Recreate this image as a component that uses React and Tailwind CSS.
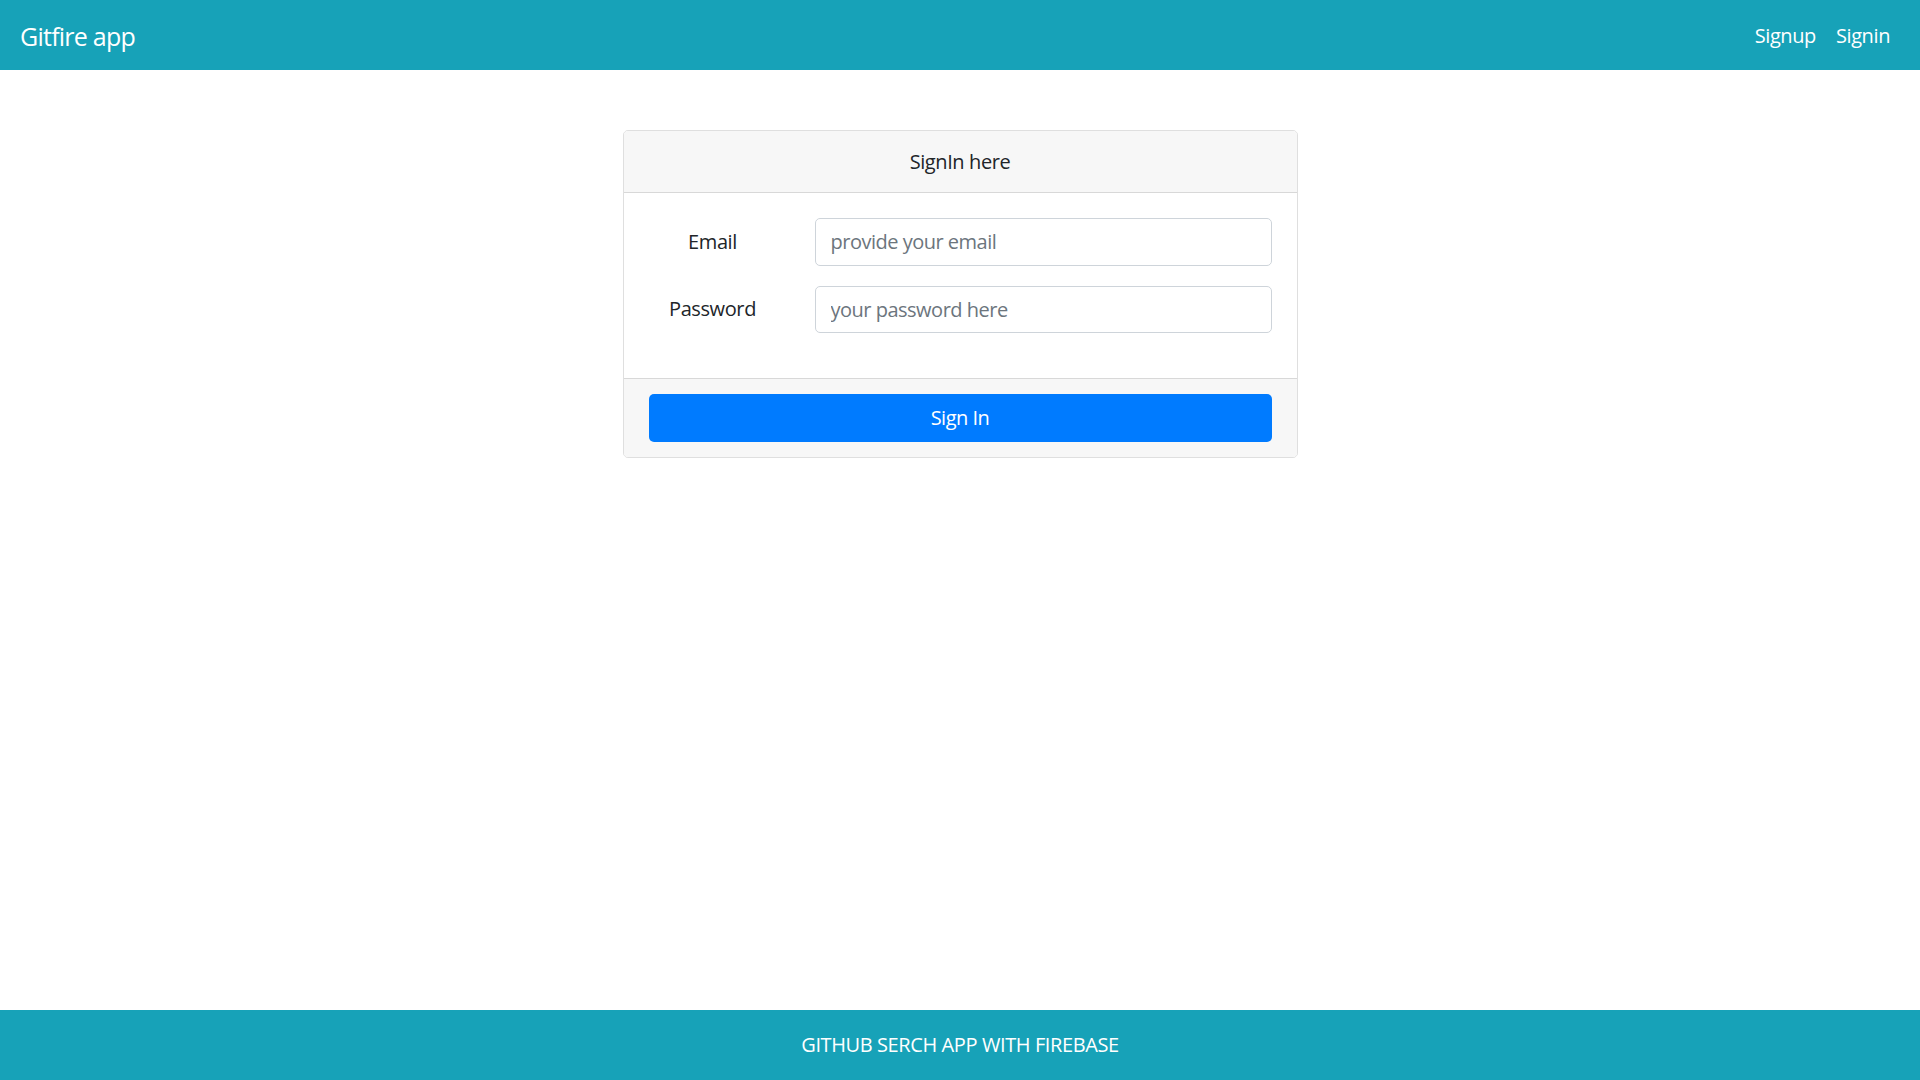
export default function App() {
  return (
    <div className="min-h-screen flex flex-col bg-white text-[#212529] font-['Segoe_UI','Open_Sans',sans-serif] tracking-[-0.025em]">
      {/* Top bar */}
      <nav className="h-[70px] bg-[#17a2b8] flex items-center justify-between px-[20px]">
        <a className="text-white text-[25px] leading-none tracking-[-0.03em] pt-[2px]">Gitfire app</a>
        <div className="flex items-center pt-[2px]">
          <a className="text-white text-[20px] px-[10px]">Signup</a>
          <a className="text-white text-[20px] px-[10px]">Signin</a>
        </div>
      </nav>

      <main className="flex-1 pt-[60px]">
        <div className="w-[675px] mx-auto border border-black/[0.125] rounded-[5px] overflow-hidden">
          <div className="h-[62px] bg-[#f7f7f7] border-b border-black/[0.125] flex items-center justify-center text-[20px]">
            SignIn here
          </div>

          <div className="p-[25px]">
            <Row label="Email" placeholder="provide your email" type="email" />
            <Row label="Password" placeholder="your password here" type="password" />
          </div>

          <div className="bg-[#f7f7f7] border-t border-black/[0.125] px-[25px] py-[15px]">
            <button className="w-full h-[47.5px] rounded-[5px] bg-[#007bff] text-white text-[20px] tracking-[-0.025em]">Sign In</button>
          </div>
        </div>
      </main>

      <footer className="h-[70px] bg-[#17a2b8] flex items-center justify-center text-white text-[20px]">
        GITHUB SERCH APP WITH FIREBASE
      </footer>
    </div>
  )
}

function Row({ label, placeholder, type }) {
  return (
    <div className="flex items-center mb-[20px]">
      <label className="w-[128px] text-center text-[20px]">{label}</label>
      <input
        type={type}
        placeholder={placeholder}
        className="ml-[38px] flex-1 h-[47.5px] px-[15px] text-[20px] tracking-[-0.025em] border border-[#ced4da] rounded-[5px] placeholder:text-[#6c757d] outline-none"
      />
    </div>
  )
}
